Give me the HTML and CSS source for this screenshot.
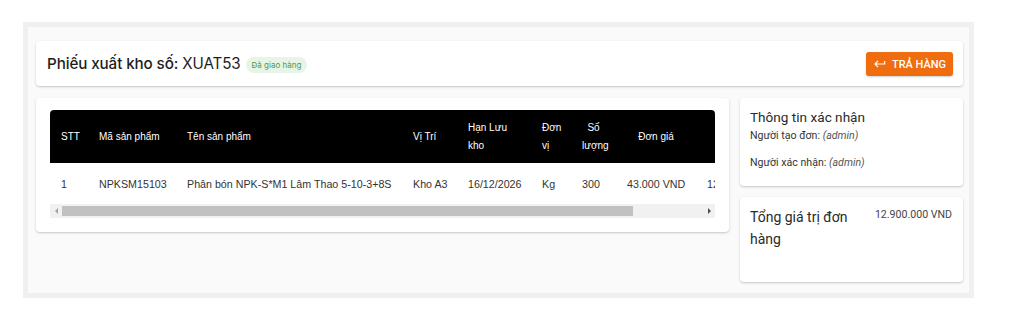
FILE: index.html
```html
<!DOCTYPE html>
<html lang="vi">
<head>
    <meta charset="UTF-8">
    <meta name="viewport" content="width=device-width, initial-scale=1.0">
    <title>Phiếu xuất kho XUAT53</title>
    <link rel="stylesheet" href="styles.css">
</head>
<body>
    <div class="page">
        <div class="frame">
            <div class="card header-card">
                <h1 class="title">Phiếu xuất kho số: <span class="code">XUAT53</span></h1>
                <span class="badge">Đã giao hàng</span>
                <button class="btn-return">
                    <svg width="14" height="14" viewBox="0 0 24 24"><path fill="currentColor" d="M19 7v4H5.83l3.58-3.59L8 6l-6 6 6 6 1.41-1.41L5.83 13H21V7z"/></svg>
                    Trả hàng
                </button>
            </div>

            <div class="content">
                <div class="card table-card">
                    <div class="table-wrap">
                        <table class="items">
                            <colgroup>
                                <col style="width:38px">
                                <col style="width:88px">
                                <col style="width:226px">
                                <col style="width:55px">
                                <col style="width:74px">
                                <col style="width:40px">
                                <col style="width:45px">
                                <col style="width:80px">
                                <col style="width:110px">
                            </colgroup>
                            <thead>
                                <tr>
                                    <th>STT</th>
                                    <th>Mã sản phẩm</th>
                                    <th>Tên sản phẩm</th>
                                    <th>Vị Trí</th>
                                    <th>Hạn Lưu<br>kho</th>
                                    <th>Đơn<br>vị</th>
                                    <th class="center">Số<br>lượng</th>
                                    <th class="center">Đơn giá</th>
                                    <th class="center">Thành tiền</th>
                                </tr>
                            </thead>
                            <tbody>
                                <tr>
                                    <td>1</td>
                                    <td>NPKSM15103</td>
                                    <td>Phân bón NPK-S*M1 Lâm Thao 5-10-3+8S</td>
                                    <td>Kho A3</td>
                                    <td>16/12/2026</td>
                                    <td>Kg</td>
                                    <td>300</td>
                                    <td>43.000 VND</td>
                                    <td>12.900.000 VND</td>
                                </tr>
                            </tbody>
                        </table>
                    </div>
                    <div class="scrollbar">
                        <span class="arrow left"></span>
                        <div class="track"><div class="thumb"></div></div>
                        <span class="arrow right"></span>
                    </div>
                </div>

                <div class="side">
                    <div class="card info-card">
                        <h2>Thông tin xác nhận</h2>
                        <p>Người tạo đơn: <em>(admin)</em></p>
                        <p>Người xác nhận: <em>(admin)</em></p>
                    </div>
                    <div class="card total-card">
                        <div class="total-label">Tổng giá trị đơn hàng</div>
                        <div class="total-value">12.900.000 VND</div>
                    </div>
                </div>
            </div>
        </div>
    </div>
</body>
</html>
```

FILE: styles.css
```css
* {
    box-sizing: border-box;
    margin: 0;
    padding: 0;
}

body {
    background: #fff;
    font-family: Roboto, 'Liberation Sans', Arial, sans-serif;
    color: #212121;
}

.page {
    width: 951px;
    margin: 22px 0 0 23px;
}

.frame {
    border: 5px solid #f0f0f0;
    background: #fafafa;
    padding: 14px 6px 11px 8px;
}

.card {
    background: #fff;
    border-radius: 4px;
    box-shadow: 0 1px 3px rgba(0, 0, 0, 0.16), 0 1px 1px rgba(0, 0, 0, 0.06);
}

/* header */
.header-card {
    height: 45px;
    display: flex;
    align-items: center;
    padding: 0 10px 0 11px;
}

.title {
    font-family: Inter, 'Open Sans', sans-serif;
    font-size: 15.2px;
    font-weight: 500;
    color: #1d1d1d;
    letter-spacing: -0.1px;
}

.title .code {
    font-weight: 400;
}

.badge {
    margin-left: 5px;
    margin-top: 2px;
    padding: 3px 6px;
    border-radius: 8px;
    background: #e6f5e6;
    color: #4f9a55;
    font-family: Inter, sans-serif;
    font-size: 8px;
}

.btn-return {
    margin-left: auto;
    margin-top: 1px;
    height: 24px;
    width: 87px;
    display: flex;
    align-items: center;
    justify-content: center;
    gap: 5px;
    border: none;
    border-radius: 3px;
    background: #ef6c0f;
    color: #fff;
    font-family: Roboto, sans-serif;
    font-size: 11px;
    font-weight: 500;
    text-transform: uppercase;
    box-shadow: 0 1px 2px rgba(0, 0, 0, 0.2);
}

/* main area */
.content {
    display: flex;
    gap: 11px;
    margin-top: 12px;
    align-items: flex-start;
}

.table-card {
    width: 693px;
    padding: 12px 14px 14px;
}

.table-wrap {
    overflow: hidden;
    border-radius: 4px 4px 0 0;
}

.items {
    width: 756px;
    table-layout: fixed;
    border-collapse: collapse;
    font-family: 'Liberation Sans', Arial, sans-serif;
}

.items th {
    background: #000;
    color: #fff;
    font-size: 10px;
    font-weight: 400;
    line-height: 18px;
    height: 53px;
    text-align: left;
    padding: 0 0 0 11px;
    white-space: nowrap;
}

.items th.center {
    text-align: center;
    padding-right: 11px;
}

.items td {
    height: 40px;
    font-size: 10.7px;
    color: #333;
    padding: 1px 0 0 11px;
    white-space: nowrap;
    overflow: hidden;
}

.scrollbar {
    display: flex;
    height: 14px;
    background: #f1f1f1;
    margin-top: 1px;
}

.arrow {
    width: 12px;
    display: flex;
    align-items: center;
    justify-content: center;
}

.arrow::before {
    content: '';
    border-top: 3px solid transparent;
    border-bottom: 3px solid transparent;
}

.arrow.left::before {
    border-right: 3px solid #a3a3a3;
}

.arrow.right::before {
    border-left: 3px solid #505050;
}

.track {
    flex: 1;
    padding: 2px 0;
}

.thumb {
    width: 571px;
    height: 100%;
    background: #c1c1c1;
}

/* side cards */
.side {
    width: 223px;
    display: flex;
    flex-direction: column;
    gap: 11px;
}

.info-card {
    height: 88px;
    padding: 11px 10px;
}

.info-card h2 {
    font-size: 13.6px;
    font-weight: 400;
    color: #2a2a2a;
    line-height: 16px;
}

.info-card p {
    font-size: 10.6px;
    color: #333;
    margin-top: 4px;
    line-height: 14px;
}

.info-card p + p {
    margin-top: 13px;
}

.info-card em {
    color: #555;
}

.total-card {
    height: 85px;
    display: flex;
    justify-content: space-between;
    padding: 9px 11px 0 10px;
}

.total-label {
    width: 110px;
    font-size: 14px;
    line-height: 22px;
    color: #2a2a2a;
}

.total-value {
    font-size: 10.6px;
    color: #444;
    margin-top: 2px;
    white-space: nowrap;
}
```
